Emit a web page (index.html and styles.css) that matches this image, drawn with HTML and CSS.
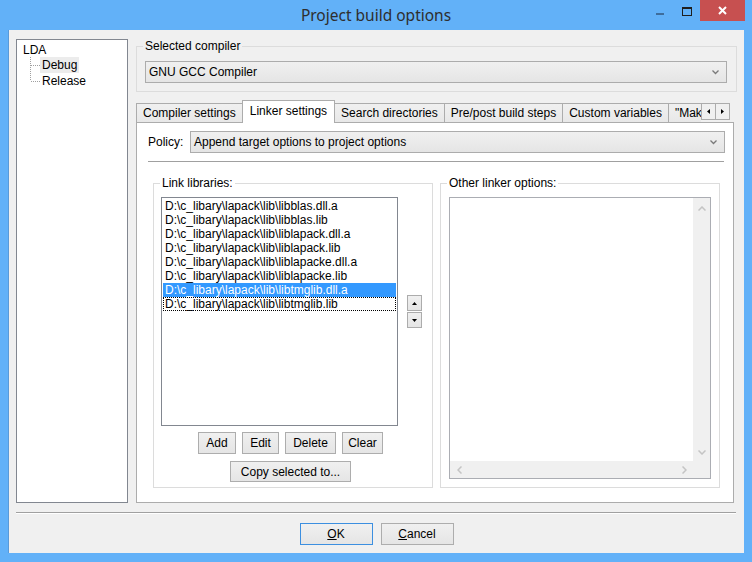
FILE: index.html
```html
<!DOCTYPE html>
<html>
<head>
<meta charset="utf-8">
<title>Project build options</title>
<link rel="stylesheet" href="styles.css">
</head>
<body>
<div class="window">
  <div class="titlebar">
    <div class="title">Project build options</div>
    <div class="caption-buttons">
      <div class="cap cap-min"><span class="min-bar"></span></div>
      <div class="cap cap-max"><span class="max-box"></span></div>
      <div class="cap cap-close"><svg width="9" height="9" viewBox="0 0 9 9"><path d="M1 1 L8 8 M8 1 L1 8" stroke="#fff" stroke-width="2" fill="none"/></svg></div>
    </div>
  </div>
  <div class="client">
    <div class="main">
      <div class="tree">
        <div class="tree-row root">LDA</div>
        <div class="tree-row child"><svg class="branch" width="10" height="16" viewBox="0 0 10 16"><path d="M0.5 0 V16 M1 8.5 H10" stroke="#a0a0a0" stroke-dasharray="1 1" fill="none"/></svg><span class="tree-label sel">Debug</span></div>
        <div class="tree-row child"><svg class="branch" width="10" height="16" viewBox="0 0 10 16"><path d="M0.5 0 V8 M1 8.5 H10" stroke="#a0a0a0" stroke-dasharray="1 1" fill="none"/></svg><span class="tree-label">Release</span></div>
      </div>
      <div class="right">
        <div class="group compiler-group">
          <span class="group-label">Selected compiler</span>
          <div class="combo"><span>GNU GCC Compiler</span><svg width="7" height="5" viewBox="0 0 7 5"><path d="M0.5 0.5 L3.5 3.5 L6.5 0.5" stroke="#7a7a7a" stroke-width="1.3" fill="none"/></svg></div>
        </div>
        <div class="tabbar">
          <div class="tabstrip">
            <div class="tab">Compiler settings</div>
            <div class="tab active">Linker settings</div>
            <div class="tab">Search directories</div>
            <div class="tab">Pre/post build steps</div>
            <div class="tab">Custom variables</div>
            <div class="tab">"Make" commands</div>
          </div>
          <div class="tab-scroll">
            <div class="ts-btn"><svg width="3" height="5" viewBox="0 0 3 5"><path d="M3 0 L0 2.5 L3 5 Z" fill="#000"/></svg></div>
            <div class="ts-btn"><svg width="3" height="5" viewBox="0 0 3 5"><path d="M0 0 L3 2.5 L0 5 Z" fill="#000"/></svg></div>
          </div>
        </div>
        <div class="panel">
          <div class="policy-row">
            <span class="policy-label">Policy:</span>
            <div class="combo"><span>Append target options to project options</span><svg width="7" height="5" viewBox="0 0 7 5"><path d="M0.5 0.5 L3.5 3.5 L6.5 0.5" stroke="#7a7a7a" stroke-width="1.3" fill="none"/></svg></div>
          </div>
          <div class="hsep"></div>
          <div class="groups">
            <div class="group lib-group">
              <span class="group-label">Link libraries:</span>
              <div class="list-row">
                <div class="listbox">
                  <div class="item">D:\c_libary\lapack\lib\libblas.dll.a</div>
                  <div class="item">D:\c_libary\lapack\lib\libblas.lib</div>
                  <div class="item">D:\c_libary\lapack\lib\liblapack.dll.a</div>
                  <div class="item">D:\c_libary\lapack\lib\liblapack.lib</div>
                  <div class="item">D:\c_libary\lapack\lib\liblapacke.dll.a</div>
                  <div class="item">D:\c_libary\lapack\lib\liblapacke.lib</div>
                  <div class="item selected">D:\c_libary\lapack\lib\libtmglib.dll.a</div>
                  <div class="item focused">D:\c_libary\lapack\lib\libtmglib.lib</div>
                </div>
                <div class="updown">
                  <div class="ud-btn"><svg width="5" height="3" viewBox="0 0 5 3"><path d="M0 3 L2.5 0 L5 3 Z" fill="#000"/></svg></div>
                  <div class="ud-btn"><svg width="5" height="3" viewBox="0 0 5 3"><path d="M0 0 L2.5 3 L5 0 Z" fill="#000"/></svg></div>
                </div>
              </div>
              <div class="btn-row">
                <div class="btn w-add">Add</div>
                <div class="btn w-edit">Edit</div>
                <div class="btn w-delete">Delete</div>
                <div class="btn w-clear">Clear</div>
              </div>
              <div class="btn-row copy-row">
                <div class="btn w-copy">Copy selected to...</div>
              </div>
            </div>
            <div class="group other-group">
              <span class="group-label">Other linker options:</span>
              <div class="textbox">
                <div class="text-area"></div>
                <div class="vscroll">
                  <svg width="8" height="5" viewBox="0 0 8 5"><path d="M0.5 4.5 L4 1 L7.5 4.5" stroke="#c4c4c4" stroke-width="1.5" fill="none"/></svg>
                  <svg width="8" height="5" viewBox="0 0 8 5"><path d="M0.5 0.5 L4 4 L7.5 0.5" stroke="#c4c4c4" stroke-width="1.5" fill="none"/></svg>
                </div>
                <div class="hscroll">
                  <svg width="5" height="8" viewBox="0 0 5 8"><path d="M4.5 0.5 L1 4 L4.5 7.5" stroke="#c4c4c4" stroke-width="1.5" fill="none"/></svg>
                  <svg width="5" height="8" viewBox="0 0 5 8"><path d="M0.5 0.5 L4 4 L0.5 7.5" stroke="#c4c4c4" stroke-width="1.5" fill="none"/></svg>
                </div>
                <div class="corner"></div>
              </div>
            </div>
          </div>
        </div>
      </div>
    </div>
    <div class="footer-sep"></div>
    <div class="footer">
      <div class="btn dlg-btn default"><span class="ul">O</span>K</div>
      <div class="btn dlg-btn"><span class="ul">C</span>ancel</div>
    </div>
  </div>
</div>
</body>
</html>
```

FILE: styles.css
```css
* { box-sizing: border-box; }
html, body { margin: 0; padding: 0; }
body {
  width: 752px;
  height: 562px;
  overflow: hidden;
  font-family: "Liberation Sans", Arial, sans-serif;
  font-size: 12px;
  color: #000;
  background: #62b1f8;
}
.window {
  width: 752px;
  height: 562px;
  background: #62b1f8;
  display: flex;
  flex-direction: column;
}
.titlebar {
  height: 30px;
  position: relative;
  flex: none;
}
.title {
  text-align: center;
  font-family: "Noto Sans", "Open Sans", sans-serif;
  font-size: 15.5px;
  line-height: 30px;
  color: #2e2e2e;
}
.caption-buttons {
  position: absolute;
  top: 0;
  right: 7px;
  display: flex;
  align-items: flex-start;
}
.cap { height: 21px; display: flex; justify-content: center; }
.cap-min { width: 26px; align-items: flex-start; }
.min-bar { width: 8px; height: 2px; background: #3e6d9c; margin-top: 13px; }
.cap-max { width: 27px; align-items: flex-start; }
.max-box { width: 10px; height: 9px; border: 1px solid #1f1f1f; border-top-width: 2px; margin-top: 7px; }
.cap-close { width: 45px; background: #c75050; align-items: center; }

.client {
  margin: 0 8px 9px 8px;
  height: 523px;
  background: #f0f0f0;
  display: flex;
  flex-direction: column;
  border-left: 1px solid #5a9ad8;
}
.main {
  display: flex;
  padding: 9px 0 0 7px;
}
.tree {
  width: 112px;
  height: 464px;
  background: #fff;
  border: 1px solid #828790;
  padding: 2px 0 0 6px;
  flex: none;
}
.tree-row { height: 16px; line-height: 16px; display: flex; align-items: center; }
.tree-row.root { height: 15px; }
.tree-row.child { margin-left: 7px; }
.branch { display: block; flex: none; }
.tree-label { padding: 0 2px; height: 16px; }
.tree-label.sel { background: #ececec; }

.right {
  margin-left: 8px;
  width: 601px;
  display: flex;
  flex-direction: column;
}
.group {
  position: relative;
  border: 1px solid #dcdcdc;
}
.group-label {
  position: absolute;
  top: -8px;
  left: 6px;
  padding: 0 2px;
  line-height: 14px;
  background: #fff;
  white-space: nowrap;
}
.compiler-group {
  margin-top: 7px;
  height: 46px;
  padding: 14px 9px 0 8px;
}
.compiler-group .group-label { background: #f0f0f0; }
.combo {
  height: 22px;
  border: 1px solid #acacac;
  background: linear-gradient(#f0f0f0, #e5e5e5);
  display: flex;
  align-items: center;
  justify-content: space-between;
  padding: 0 7px 0 3px;
  white-space: nowrap;
}
.combo svg { display: block; }

.tabbar {
  margin-top: 8px;
  height: 22px;
  display: flex;
  align-items: flex-start;
}
.tabstrip {
  width: 565px;
  height: 23px;
  display: flex;
  align-items: flex-end;
  overflow: hidden;
  position: relative;
  z-index: 1;
  flex: none;
}
.tab {
  flex: none;
  height: 20px;
  border: 1px solid #acacac;
  margin-left: -1px;
  padding: 0 6px;
  line-height: 18px;
  background: linear-gradient(#f0f0f0, #e8e8e8);
  white-space: nowrap;
}
.tab:first-child { margin-left: 0; }
.tab.active {
  height: 23px;
  border-bottom: none;
  background: #fff;
  padding: 0 7px;
  line-height: 21px;
  position: relative;
  z-index: 2;
}
.tab-scroll {
  margin-top: 3px;
  display: flex;
}
.ts-btn {
  width: 15px;
  height: 17px;
  border: 1px solid #acacac;
  background: #f0f0f0;
  display: flex;
  align-items: center;
  justify-content: center;
}
.ts-btn + .ts-btn { margin-left: -1px; }
.ts-btn svg { display: block; }

.panel {
  width: 598px;
  height: 381px;
  border: 1px solid #acacac;
  background: #fff;
}
.policy-row {
  margin: 8px 8px 0 11px;
  display: flex;
  align-items: center;
}
.policy-label { width: 42px; flex: none; }
.policy-row .combo { flex: 1; }
.hsep {
  margin: 8px 9px 0 11px;
  height: 1px;
  background: #a0a0a0;
}
.groups {
  display: flex;
  gap: 7px;
  margin: 21px 0 0 16px;
}
.lib-group, .other-group {
  width: 280px;
  height: 305px;
  flex: none;
}
.lib-group { padding: 13px 0 0 7px; }
.list-row { display: flex; align-items: center; }
.listbox {
  width: 237px;
  height: 229px;
  border: 1px solid #828790;
  background: #fff;
  padding: 1px;
  flex: none;
}
.item {
  height: 14px;
  line-height: 14px;
  padding-left: 2px;
  white-space: nowrap;
}
.item.selected { background: #3399ff; color: #fff; }
.item.focused { outline: 1px dotted #000; outline-offset: -1px; }
.updown { margin-left: 9px; display: flex; flex-direction: column; gap: 1px; }
.ud-btn {
  width: 15px;
  height: 16px;
  border: 1px solid #acacac;
  background: linear-gradient(#f0f0f0, #e5e5e5);
  display: flex;
  align-items: center;
  justify-content: center;
}
.ud-btn svg { display: block; }
.btn-row {
  display: flex;
  justify-content: center;
  gap: 6px;
  margin: 6px 0 0 -12px;
}
.copy-row { margin-top: 7px; }
.btn {
  height: 22px;
  border: 1px solid #adadad;
  background: linear-gradient(#f0f0f0, #e5e5e5);
  display: flex;
  align-items: center;
  justify-content: center;
  white-space: nowrap;
}
.w-add { width: 38px; }
.w-edit { width: 37px; }
.w-delete { width: 51px; }
.w-clear { width: 41px; }
.w-copy { width: 121px; height: 21px; }

.other-group { padding: 13px 0 0 8px; }
.textbox {
  width: 262px;
  height: 282px;
  border: 1px solid #abadb3;
  background: #fff;
  display: grid;
  grid-template-columns: 1fr 17px;
  grid-template-rows: 1fr 17px;
}
.vscroll {
  background: #f0f0f0;
  display: flex;
  flex-direction: column;
  justify-content: space-between;
  align-items: center;
  padding: 8px 0 6px;
}
.hscroll {
  background: #f0f0f0;
  display: flex;
  justify-content: space-between;
  align-items: center;
  padding: 0 6px 0 7px;
}
.corner { background: #f0f0f0; }
.vscroll svg, .hscroll svg { display: block; }

.footer-sep {
  margin: 9px 8px 0 7px;
  height: 2px;
  border-top: 1px solid #a0a0a0;
  border-bottom: 1px solid #fff;
}
.footer {
  margin-top: 9px;
  display: flex;
  justify-content: center;
  gap: 8px;
}
.dlg-btn { width: 73px; height: 22px; }
.dlg-btn.default { border-color: #3c8fe0; }
.ul { text-decoration: underline; }
```
